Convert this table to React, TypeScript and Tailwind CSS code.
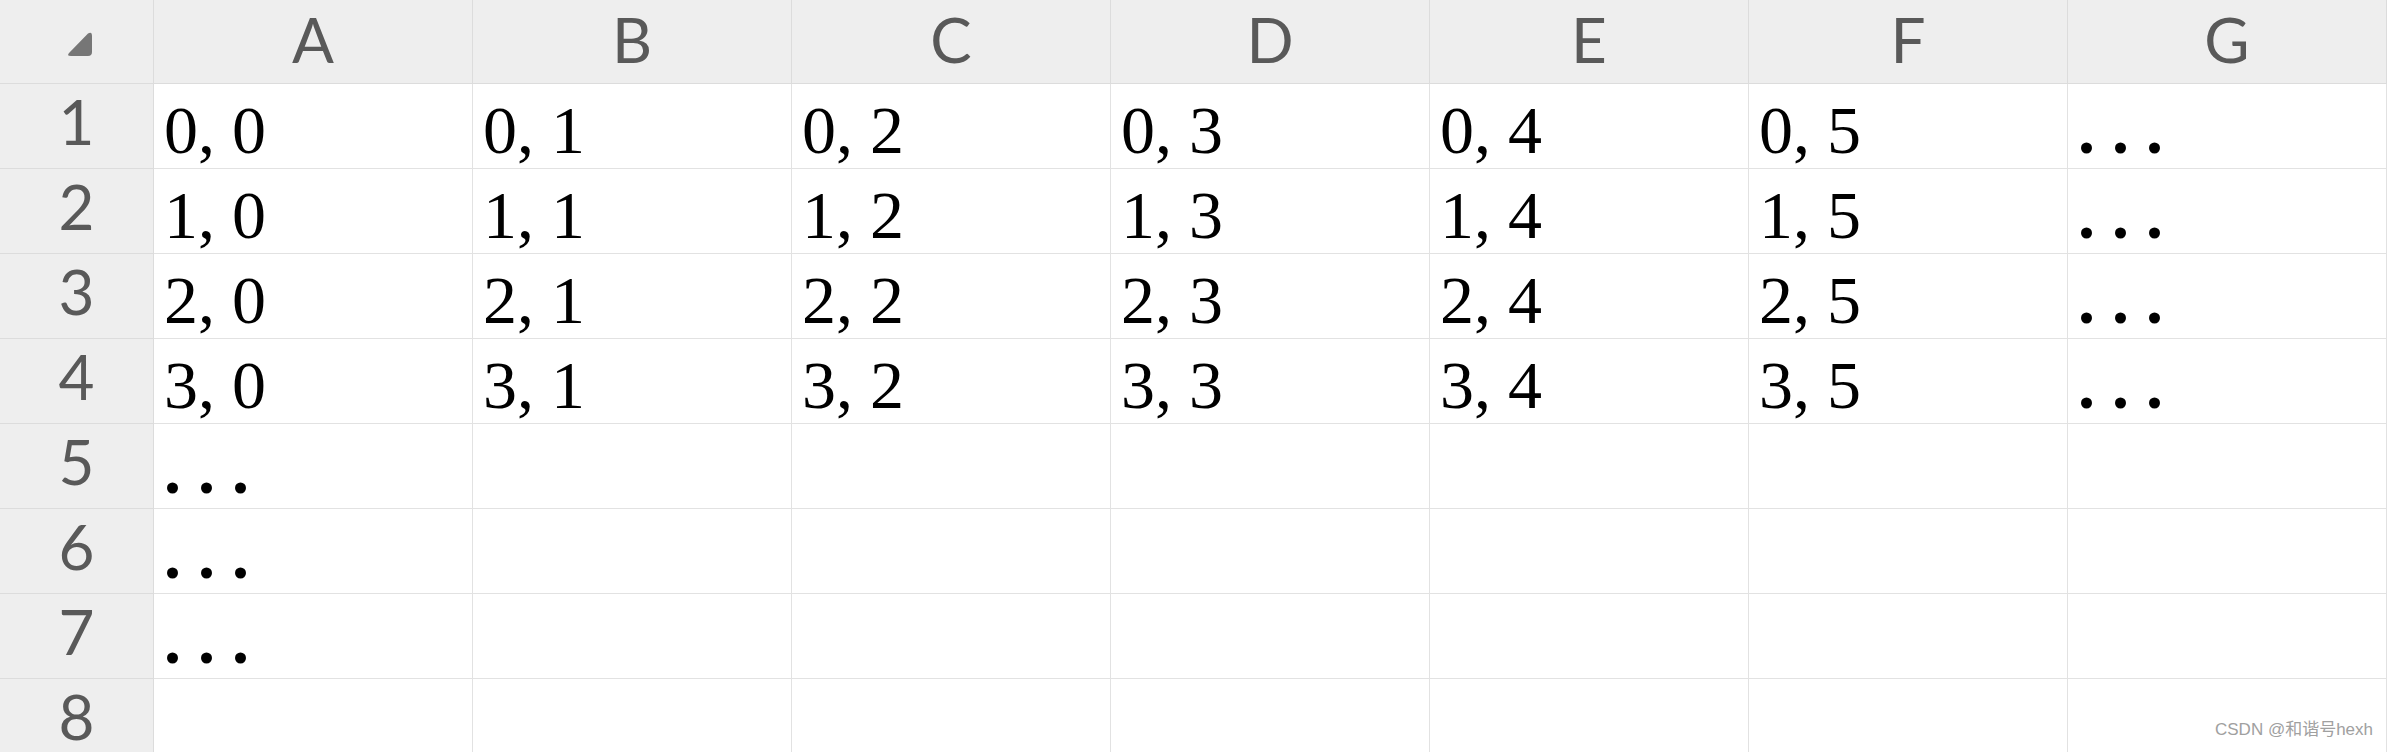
import React from "react";

const cols = ["A", "B", "C", "D", "E", "F", "G"];

function cellText(r: number, c: number): string {
  if (r <= 4) {
    if (c <= 5) return `${r - 1}, ${c}`;
    return ". . .";
  }
  if (r <= 7 && c === 0) return ". . .";
  return "";
}

export default function App() {
  const rows = [1, 2, 3, 4, 5, 6, 7, 8];
  return (
    <div className="relative w-[2387px] h-[752px] overflow-hidden bg-white">
      <div className="grid grid-cols-[154px_repeat(7,319px)] grid-rows-[84px_repeat(8,85px)]">
        {/* corner */}
        <div className="bg-[#eeeeee] border-r border-b border-[#dcdcdc] flex items-start justify-start pl-[66px] pt-[31px]">
          <svg width="27" height="26" viewBox="0 0 27 26">
            <path
              d="M22 2.5 Q26 0 26 5 L26 21 Q26 25 22 25 L5 25 Q0 25 3.5 21.5 Z"
              fill="#767676"
            />
          </svg>
        </div>
        {cols.map((c) => (
          <div
            key={c}
            className="bg-[#eeeeee] border-r border-b border-[#dcdcdc] flex items-center justify-center pb-[6px] text-[62px] leading-none text-[#595959] font-['Lato','Open_Sans',sans-serif]"
          >
            {c}
          </div>
        ))}
        {rows.map((r) => (
          <React.Fragment key={r}>
            <div className="bg-[#eeeeee] border-r border-b border-[#dcdcdc] flex items-center justify-center pb-[10px] text-[62px] leading-none text-[#595959] font-['Lato','Open_Sans',sans-serif]">
              {r}
            </div>
            {cols.map((c, ci) => {
              const t = cellText(r, ci);
              const dots = t === ". . .";
              return (
                <div
                  key={c}
                  className={
                    dots
                      ? "border-r border-b border-[#e2e2e2] flex items-end pl-[10px] pb-[4px] text-[68px] leading-none text-black font-bold font-['Liberation_Serif','DejaVu_Serif',serif] whitespace-pre"
                      : "border-r border-b border-[#e2e2e2] flex items-end pl-[10px] pb-[4px] text-[68px] leading-none text-black font-['Liberation_Serif','DejaVu_Serif',serif] whitespace-pre"
                  }
                >
                  {t}
                </div>
              );
            })}
          </React.Fragment>
        ))}
      </div>
      <div className="absolute right-[14px] bottom-[14px] text-[17px] leading-none text-[#a0a0a0] font-['Liberation_Sans','Noto_Sans_CJK_SC',sans-serif]">
        CSDN @和谐号hexh
      </div>
    </div>
  );
}
